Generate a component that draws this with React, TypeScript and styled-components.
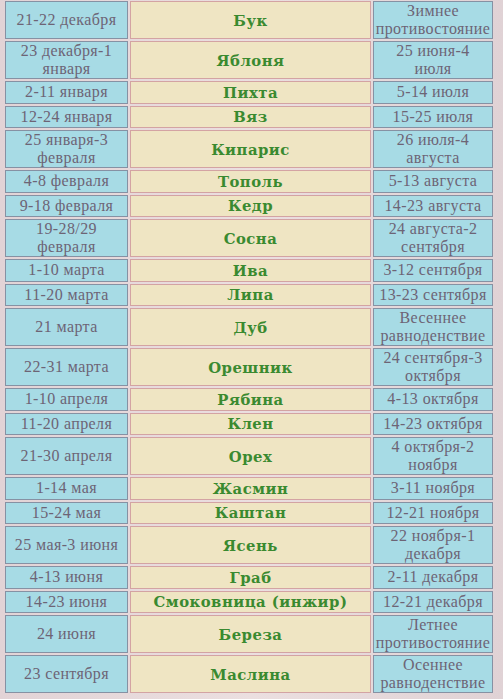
import React from "react";
import styled, { createGlobalStyle } from "styled-components";

const Global = createGlobalStyle`
  html, body { margin: 0; padding: 0; }
  body { background: #e4d5d8; width: 503px; height: 699px; overflow: hidden; }
`;

const Page = styled.div`
  width: 503px;
  height: 699px;
  box-sizing: border-box;
  padding: 0 0 0 5px;
  background: linear-gradient(90deg, #e2d3d6, #ebdfe0 50%, #e0d2d5);
`;

const Table = styled.div`
  display: flex;
  flex-direction: column;
  gap: 2px;
  padding-top: 1px;
`;

const Row = styled.div<{ $tall: boolean }>`
  display: grid;
  grid-template-columns: 123px 241px 120px;
  column-gap: 2px;
  height: ${(p) => (p.$tall ? "38px" : "22.5px")};
`;

const DateCell = styled.div`
  box-sizing: border-box;
  background: #a7dbe5;
  border: 1px solid #8691a3;
  display: flex;
  flex-direction: column;
  align-items: center;
  justify-content: center;
  font-family: "Liberation Serif", "Times New Roman", serif;
  font-size: 16px;
  letter-spacing: 0.4px;
  line-height: 18px;
  color: #6d6475;
  white-space: nowrap;
  overflow: hidden;
  text-align: center;
`;

const Line = styled.span`
  display: block;
  height: 18px;
  line-height: 18px;
`;

const TreeCell = styled.div`
  box-sizing: border-box;
  background: #efe5c3;
  border: 1px solid #d3a3a3;
  display: flex;
  align-items: center;
  justify-content: center;
  font-family: "DejaVu Serif", "Liberation Serif", serif;
  font-weight: bold;
  font-size: 14.8px;
  letter-spacing: 0.5px;
  color: #3a8a30;
  white-space: nowrap;
`;

type R = { a: string[]; t: string; b: string[]; tall?: boolean };

const rows: R[] = [
  { a: ["21-22 декабря"], t: "Бук", b: ["Зимнее", "противостояние"], tall: true },
  { a: ["23 декабря-1", "января"], t: "Яблоня", b: ["25 июня-4", "июля"], tall: true },
  { a: ["2-11 января"], t: "Пихта", b: ["5-14 июля"] },
  { a: ["12-24 января"], t: "Вяз", b: ["15-25 июля"] },
  { a: ["25 января-3", "февраля"], t: "Кипарис", b: ["26 июля-4", "августа"], tall: true },
  { a: ["4-8 февраля"], t: "Тополь", b: ["5-13 августа"] },
  { a: ["9-18 февраля"], t: "Кедр", b: ["14-23 августа"] },
  { a: ["19-28/29", "февраля"], t: "Сосна", b: ["24 августа-2", "сентября"], tall: true },
  { a: ["1-10 марта"], t: "Ива", b: ["3-12 сентября"] },
  { a: ["11-20 марта"], t: "Липа", b: ["13-23 сентября"] },
  { a: ["21 марта"], t: "Дуб", b: ["Весеннее", "равноденствие"], tall: true },
  { a: ["22-31 марта"], t: "Орешник", b: ["24 сентября-3", "октября"], tall: true },
  { a: ["1-10 апреля"], t: "Рябина", b: ["4-13 октября"] },
  { a: ["11-20 апреля"], t: "Клен", b: ["14-23 октября"] },
  { a: ["21-30 апреля"], t: "Орех", b: ["4 октября-2", "ноября"], tall: true },
  { a: ["1-14 мая"], t: "Жасмин", b: ["3-11 ноября"] },
  { a: ["15-24 мая"], t: "Каштан", b: ["12-21 ноября"] },
  { a: ["25 мая-3 июня"], t: "Ясень", b: ["22 ноября-1", "декабря"], tall: true },
  { a: ["4-13 июня"], t: "Граб", b: ["2-11 декабря"] },
  { a: ["14-23 июня"], t: "Смоковница (инжир)", b: ["12-21 декабря"] },
  { a: ["24 июня"], t: "Береза", b: ["Летнее", "противостояние"], tall: true },
  { a: ["23 сентября"], t: "Маслина", b: ["Осеннее", "равноденствие"], tall: true },
];

export default function App() {
  return (
    <Page>
      <Global />
      <Table>
        {rows.map((r, i) => (
          <Row key={i} $tall={!!r.tall}>
            <DateCell>
              {r.a.map((l, j) => (
                <Line key={j}>{l}</Line>
              ))}
            </DateCell>
            <TreeCell>{r.t}</TreeCell>
            <DateCell>
              {r.b.map((l, j) => (
                <Line key={j}>{l}</Line>
              ))}
            </DateCell>
          </Row>
        ))}
      </Table>
    </Page>
  );
}
